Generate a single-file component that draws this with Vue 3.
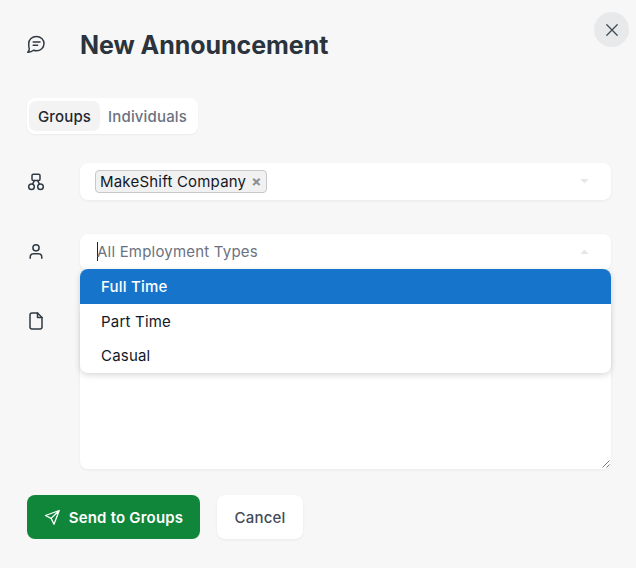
<script setup>
const options = ['Full Time', 'Part Time', 'Casual']
</script>

<template>
  <div class="page">
    <button class="close" aria-label="Close">
      <svg width="16" height="16" viewBox="0 0 16 16" fill="none" stroke="#414b57" stroke-width="1.3" stroke-linecap="round"><path d="M2.800 2.800l10.400 10.400M13.200 2.800L2.800 13.200" /></svg>
    </button>

    <header class="head">
      <div class="ico">
        <svg width="20" height="20" viewBox="0 0 20 20" fill="none" stroke="#2f3a45" stroke-width="1.5" stroke-linecap="round" stroke-linejoin="round">
          <path d="M10.400 2.400c4.300 0 7.600 3.200 7.600 7.200s-3.300 7.200-7.600 7.200c-1 0-2-.2-2.900-.5-1.400 1.300-3.300 2-5.800 1.900 1.100-1 1.600-2 1.600-3.500-.5-1.100-.6-3.100-.6-5.100 0-4 3.400-7.200 7.700-7.200z" />
          <path d="M7.200 8h6.800M7.200 11.200h4.400" />
        </svg>
      </div>
      <h1>New Announcement</h1>
    </header>

    <div class="tabs">
      <span class="tab active">Groups</span>
      <span class="tab">Individuals</span>
    </div>

    <div class="row first">
      <div class="ico">
        <svg width="20" height="20" viewBox="0 0 20 20" fill="none" stroke="#2f3a45" stroke-width="1.5" stroke-linecap="round" stroke-linejoin="round">
          <rect x="6" y="2.200" width="8" height="6.400" rx="1.400" />
          <circle cx="5.500" cy="14.700" r="2.800" />
          <circle cx="14.500" cy="14.700" r="2.800" />
          <path d="M8.300 8.600l-1.700 3.500M11.700 8.600l1.700 3.500" />
        </svg>
      </div>
      <div class="field select">
        <span class="chip">MakeShift Company <span class="x">×</span></span>
        <svg class="caret" width="9" height="6" viewBox="0 0 9 6" fill="#e6e6e6" stroke="#e6e6e6" stroke-width="1.200" stroke-linejoin="round"><path d="M1.500 1.500h6L4.500 4.600z" /></svg>
      </div>
    </div>

    <div class="row second">
      <div class="ico">
        <svg width="20" height="20" viewBox="0 0 20 20" fill="none" stroke="#2f3a45" stroke-width="1.5" stroke-linecap="round" stroke-linejoin="round">
          <circle cx="10" cy="5.800" r="3.100" />
          <path d="M4.200 16.300v-1.100c0-2 1.500-3.400 3.500-3.400h4.600c2 0 3.500 1.400 3.500 3.400v1.100" />
        </svg>
      </div>
      <div class="field select second-field">
        <span class="cursor"></span>
        <span class="placeholder">All Employment Types</span>
        <svg class="caret" width="9" height="6" viewBox="0 0 9 6" fill="#e6e6e6" stroke="#e6e6e6" stroke-width="1.200" stroke-linejoin="round"><path d="M1.500 4.500h6L4.500 1.400z" /></svg>
        <ul class="menu">
          <li v-for="(o, i) in options" :key="o" :class="{ selected: i === 0 }">{{ o }}</li>
        </ul>
      </div>
    </div>

    <div class="row third">
      <div class="ico doc">
        <svg width="20" height="20" viewBox="0 0 20 20" fill="none" stroke="#2f3a45" stroke-width="1.5" stroke-linecap="round" stroke-linejoin="round">
          <path d="M11.500 2H6a2 2 0 0 0-2 2v12a2 2 0 0 0 2 2h8a2 2 0 0 0 2-2V6.500z" />
          <path d="M11.500 2v4.500H16" />
        </svg>
      </div>
      <div class="field area">
        <svg class="grip" width="8" height="8" viewBox="0 0 8 8" stroke="#55595f" stroke-width="0.8" fill="none"><path d="M0.500 7.500l7-7M4.500 7.500l3-3" /></svg>
      </div>
    </div>

    <div class="actions">
      <button class="send">
        <svg width="17" height="17" viewBox="0 0 17 17" fill="none" stroke="#fff" stroke-width="1.300" stroke-linejoin="round" stroke-linecap="round">
          <path d="M15.200 1.500L1.500 6.500l5.600 2.900 2.900 5.800zM15.200 1.500L7.100 9.400" />
        </svg>
        Send to Groups
      </button>
      <button class="cancel">Cancel</button>
    </div>
  </div>
</template>

<style>
html, body { margin: 0; background: #f7f7f7; }
</style>

<style scoped>
.page {
  position: relative;
  box-sizing: border-box;
  width: 636px;
  height: 568px;
  padding: 27px 25px 0 27px;
  background: #f7f7f7;
  font-family: Inter, "Liberation Sans", sans-serif;
  font-size: 15px;
  letter-spacing: 0.2px;
  overflow: hidden;
}
.close {
  position: absolute;
  left: 594px;
  top: 12px;
  width: 35px;
  height: 35px;
  border: 0;
  padding: 0;
  border-radius: 50%;
  background: #e8e9eb;
  display: flex;
  align-items: center;
  justify-content: center;
}
.head { display: flex; align-items: center; height: 34px; }
.ico { width: 53px; flex: none; display: flex; align-items: center; }
.ico svg { margin-left: -1px; }
h1 {
  margin: 1px 0 0;
  font-size: 25px;
  line-height: 34px;
  font-weight: 700;
  color: #2b333c;
  letter-spacing: -0.05px;
}
.tabs {
  display: inline-flex;
  margin-top: 37px;
  height: 36px;
  box-sizing: border-box;
  padding: 3px 2px;
  background: #fff;
  border-radius: 8px;
  box-shadow: 0 1px 2px rgba(0, 0, 0, 0.05);
}
.tab {
  display: flex;
  align-items: center;
  padding: 0 9px 0 8px;
  font-weight: 500;
  letter-spacing: 0.15px;
  color: #6b7280;
  border-radius: 7px;
}
.tab.active { background: #f3f3f3; color: #1f2730; padding: 0 9px; }
.row { display: flex; align-items: flex-start; }
.row.first { margin-top: 29px; }
.row.second { margin-top: 34px; position: relative; z-index: 2; }
.row.third { margin-top: 35px; }
.row.first .ico { height: 37px; }
.row.second .ico { height: 36px; }
.doc { height: 32px; }
.field {
  flex: 1;
  position: relative;
  background: #fff;
  border-radius: 8px;
  box-shadow: 0 1px 3px rgba(0, 0, 0, 0.06);
  box-sizing: border-box;
}
.select { display: flex; align-items: center; height: 37px; padding-left: 15px; }
.second-field { height: 36px; padding: 0 0 1px 17px; }
.chip {
  display: inline-flex;
  align-items: center;
  height: 23px;
  box-sizing: border-box;
  padding: 0 4px;
  gap: 5px;
  background: #f1f1f2;
  border: 1px solid #c6c8cb;
  border-radius: 4px;
  color: #111827;
}
.x { color: #8b8f94; font-size: 15px; font-weight: 700; line-height: 1; }
.cursor { width: 1px; height: 19px; margin-right: -1px; background: #1f2730; flex: none; }
.placeholder { color: #6b7280; font-weight: 400; }
.caret { position: absolute; right: 22px; top: 15px; }
.menu {
  position: absolute;
  left: 0;
  right: 0;
  top: 35px;
  margin: 0;
  padding: 0;
  list-style: none;
  background: #fff;
  border-radius: 8px;
  overflow: hidden;
  box-shadow: 0 2px 6px rgba(0, 0, 0, 0.16);
}
.menu li {
  height: 34.500px;
  line-height: 36px;
  padding-left: 21px;
  font-weight: 400;
  color: #111827;
}
.menu li.selected { background: #1675cb; color: #fff; font-weight: 500; }
.area { height: 164px; }
.grip { position: absolute; right: 1px; bottom: 1px; }
.actions { display: flex; gap: 17px; margin-top: 26px; }
.actions button {
  height: 44px;
  border: 0;
  border-radius: 8px;
  font-family: inherit;
  font-size: 15px;
  letter-spacing: 0.2px;
  padding: 0;
}
.send {
  width: 173px;
  display: flex;
  align-items: center;
  justify-content: center;
  gap: 8px;
  background: #10863a;
  color: #fff;
  font-weight: 600;
}
.cancel {
  width: 86px;
  background: #fff;
  color: #434b59;
  font-weight: 500;
  box-shadow: 0 1px 3px rgba(0, 0, 0, 0.06);
}
</style>
